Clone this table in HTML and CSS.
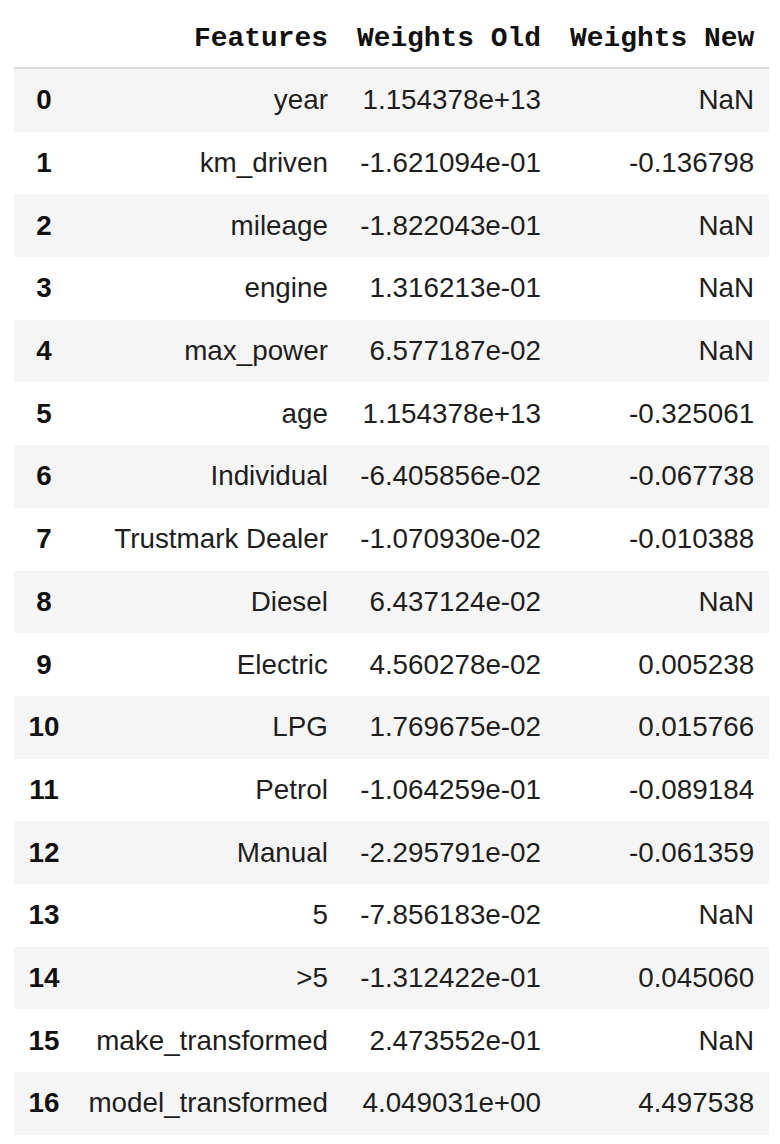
FILE: index.html
```html
<!DOCTYPE html>
<html>
<head>
<meta charset="utf-8">
<link rel="stylesheet" href="styles.css">
</head>
<body>
<table class="df">
  <thead>
    <tr>
      <th class="idx"></th>
      <th>Features</th>
      <th>Weights Old</th>
      <th>Weights New</th>
    </tr>
  </thead>
  <tbody>
    <tr><th class="idx">0</th><td>year</td><td>1.154378e+13</td><td>NaN</td></tr>
    <tr><th class="idx">1</th><td>km_driven</td><td>-1.621094e-01</td><td>-0.136798</td></tr>
    <tr><th class="idx">2</th><td>mileage</td><td>-1.822043e-01</td><td>NaN</td></tr>
    <tr><th class="idx">3</th><td>engine</td><td>1.316213e-01</td><td>NaN</td></tr>
    <tr><th class="idx">4</th><td>max_power</td><td>6.577187e-02</td><td>NaN</td></tr>
    <tr><th class="idx">5</th><td>age</td><td>1.154378e+13</td><td>-0.325061</td></tr>
    <tr><th class="idx">6</th><td>Individual</td><td>-6.405856e-02</td><td>-0.067738</td></tr>
    <tr><th class="idx">7</th><td>Trustmark Dealer</td><td>-1.070930e-02</td><td>-0.010388</td></tr>
    <tr><th class="idx">8</th><td>Diesel</td><td>6.437124e-02</td><td>NaN</td></tr>
    <tr><th class="idx">9</th><td>Electric</td><td>4.560278e-02</td><td>0.005238</td></tr>
    <tr><th class="idx">10</th><td>LPG</td><td>1.769675e-02</td><td>0.015766</td></tr>
    <tr><th class="idx">11</th><td>Petrol</td><td>-1.064259e-01</td><td>-0.089184</td></tr>
    <tr><th class="idx">12</th><td>Manual</td><td>-2.295791e-02</td><td>-0.061359</td></tr>
    <tr><th class="idx">13</th><td>5</td><td>-7.856183e-02</td><td>NaN</td></tr>
    <tr><th class="idx">14</th><td>&gt;5</td><td>-1.312422e-01</td><td>0.045060</td></tr>
    <tr><th class="idx">15</th><td>make_transformed</td><td>2.473552e-01</td><td>NaN</td></tr>
    <tr><th class="idx">16</th><td>model_transformed</td><td>4.049031e+00</td><td>4.497538</td></tr>
  </tbody>
</table>
</body>
</html>
```
FILE: styles.css
```css
html, body {
  margin: 0;
  padding: 0;
  background: #ffffff;
}

.df {
  margin-left: 14px;
  border-collapse: collapse;
  border-spacing: 0;
  font-family: "Liberation Sans", Arial, sans-serif;
  font-size: 27.8px;
  color: #1e1e1e;
}

.df thead th {
  font-family: "Liberation Mono", "Courier New", monospace;
  font-weight: bold;
  font-size: 27.9px;
  color: #111111;
  text-align: right;
  height: 68px;
  padding: 10px 14.5px 0 14.5px;
  box-sizing: border-box;
  vertical-align: middle;
  border-bottom: 2px solid #dcdcdc;
  line-height: 32px;
}

.df tbody td,
.df tbody th {
  height: 62.7px;
  padding: 0 14.5px;
  vertical-align: middle;
  line-height: 32px;
  white-space: nowrap;
}

.df tbody td {
  text-align: right;
}

.df .idx {
  text-align: center;
  font-weight: bold;
  color: #111111;
}

.df tbody tr:nth-child(odd) {
  background: #f5f5f5;
}
```
